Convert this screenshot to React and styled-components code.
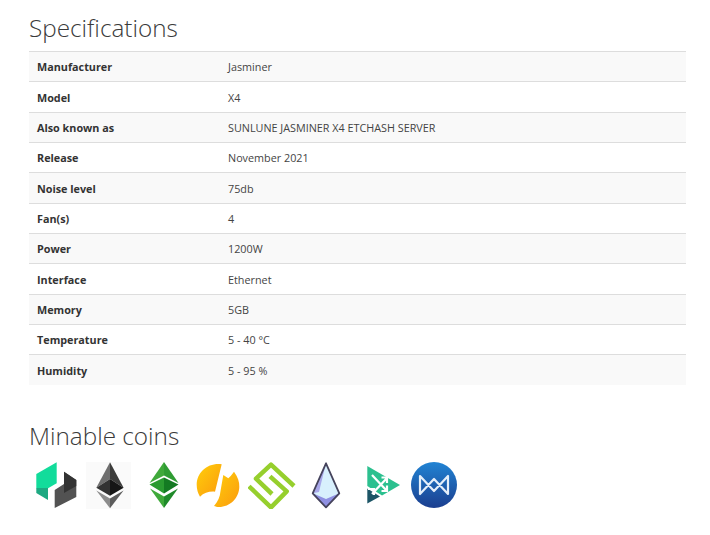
import React from "react";
import styled, { createGlobalStyle } from "styled-components";

const specs = [
  ["Manufacturer", "Jasminer"],
  ["Model", "X4"],
  ["Also known as", "SUNLUNE JASMINER X4 ETCHASH SERVER"],
  ["Release", "November 2021"],
  ["Noise level", "75db"],
  ["Fan(s)", "4"],
  ["Power", "1200W"],
  ["Interface", "Ethernet"],
  ["Memory", "5GB"],
  ["Temperature", "5 - 40 °C"],
  ["Humidity", "5 - 95 %"],
];

const UbiqIcon = () => (
  <svg viewBox="0 0 48 48">
    <path d="M4.300 13 24.700 1.300v21L16 27.300H4.300z" fill="#12dc9b" />
    <path d="M4.300 27H16v12L4.300 32z" fill="#1ea982" />
    <path d="M32 10.700 44.300 19v17L22.700 47V29L32 23z" fill="#525252" />
    <path d="M32 10.700 44.300 19v6L32 32z" fill="#333" />
  </svg>
);

const EthereumIcon = () => (
  <svg viewBox="0 0 48 48">
    <rect y="1" width="45" height="47" fill="#fafafa" />
    <path d="M24 1.300 10.300 26.700 24 18z" fill="#6f6f6f" />
    <path d="M24 1.300 37.600 26.700 24 18z" fill="#3c3c3b" />
    <path d="M24 18 10.300 26.700 24 34.700z" fill="#333" />
    <path d="M24 18 37.600 26.700 24 34.700z" fill="#161616" />
    <path d="M10.300 29.500 24 37.500v9.800z" fill="#8c8c8c" />
    <path d="M37.600 29.500 24 37.500v9.800z" fill="#5c5c5c" />
  </svg>
);

const EthereumClassicIcon = () => (
  <svg viewBox="0 0 48 48">
    <path d="M24 1 9.500 22 24 14.500z" fill="#3fa93a" />
    <path d="M24 1 38.500 22 24 14.500z" fill="#2f9c33" />
    <path d="M9.500 23.500 24 16.500V32.500z" fill="#2a9a30" />
    <path d="M38.500 23.500 24 16.500V32.500z" fill="#137a22" />
    <path d="M10 27.500 24 35.500V47z" fill="#3fa93a" />
    <path d="M38 27.500 24 35.500V47z" fill="#1f8a2a" />
  </svg>
);

const OrangeIcon = () => (
  <svg viewBox="0 0 48 48">
    <defs>
      <linearGradient id="orangeFill" x1="0" y1="0" x2="1" y2="1">
        <stop offset="0" stopColor="#ffcf0a" />
        <stop offset="1" stopColor="#fb9a0e" />
      </linearGradient>
    </defs>
    <path
      d="M27.700 3.300C14 1.500 2.800 11 2.700 24c0 4 1.200 8.500 3.300 11.700 4-4 9.500-5.500 15-5z"
      fill="url(#orangeFill)"
    />
    <path
      d="M29.300 14 34.300 17.300Q37 15 40 10.700C44 16 45.500 21 45.300 26 45 37 36 46 25 46 23 46 21.500 45.500 20 45 24 40 26 36 26.500 30z"
      fill="url(#orangeFill)"
    />
  </svg>
);

const SnakeIcon = () => (
  <svg viewBox="0 0 48 48">
    <path
      d="M46 25 23 3.700 8 17.700 24 33M1 25.300 23 46.300 38.700 30.300 22 15.300"
      fill="none"
      stroke="#96cf2d"
      strokeWidth="4.500"
      strokeLinejoin="round"
    />
  </svg>
);

const CrystalIcon = () => (
  <svg viewBox="0 0 48 48">
    <path d="M24 2.300 10.700 32.300 24 46.300 37.300 32.300z" fill="#d8f0fd" />
    <path d="M10.700 32.300 24 46.300V38zM37.300 32.300 24 46.300V38z" fill="#8f90e2" />
    <path d="M24 2.300 10.700 32.300 17 31z" fill="#a9a8ea" />
    <path
      d="M24 2.300 10.700 32.300 24 46.300 37.300 32.300z"
      fill="none"
      stroke="#45435c"
      strokeWidth="1.800"
      strokeLinejoin="round"
    />
  </svg>
);

const ArrowIcon = () => (
  <svg viewBox="0 0 48 48">
    <path d="M11.300 5 44 24 26 34.500 11.300 25z" fill="#2cc08f" />
    <path d="M11.300 27.500 24 35.500 11.300 42.500z" fill="#1c5566" />
    <path
      d="M16 14 31 30M31 24.500V30H25.500M16 33 31 17M25.500 16.500H31V22M12 28H18V34"
      fill="none"
      stroke="#fff"
      strokeWidth="2.200"
    />
  </svg>
);

const MetaverseIcon = () => (
  <svg viewBox="0 0 48 48">
    <defs>
      <linearGradient id="blueFill" x1="0" y1="0" x2="0" y2="1">
        <stop offset="0" stopColor="#2183d3" />
        <stop offset="1" stopColor="#1b3e8f" />
      </linearGradient>
    </defs>
    <circle cx="24" cy="24" r="23" fill="url(#blueFill)" />
    <path
      d="M10 33V15L24 30 38 15V33L24 18Z"
      fill="none"
      stroke="#e4eefa"
      strokeWidth="2.200"
      strokeLinejoin="round"
    />
  </svg>
);

const coins = [
  UbiqIcon,
  EthereumIcon,
  EthereumClassicIcon,
  OrangeIcon,
  SnakeIcon,
  CrystalIcon,
  ArrowIcon,
  MetaverseIcon,
];

export default function App() {
  return (
    <Page>
      <GlobalStyle />
      <Heading>Specifications</Heading>
      <SpecTable>
        <tbody>
          {specs.map(([label, value]) => (
            <tr key={label}>
              <LabelCell>{label}</LabelCell>
              <ValueCell>{value}</ValueCell>
            </tr>
          ))}
        </tbody>
      </SpecTable>
      <CoinHeading>Minable coins</CoinHeading>
      <CoinRow>
        {coins.map((Coin, index) => (
          <CoinBox key={index}>
            <Coin />
          </CoinBox>
        ))}
      </CoinRow>
    </Page>
  );
}

const GlobalStyle = createGlobalStyle`
  body {
    margin: 0;
    background: #fff;
    font-family: "Open Sans", "Liberation Sans", sans-serif;
  }
`;

const Page = styled.div`
  width: 710px;
  height: 535px;
  box-sizing: border-box;
  padding: 13px 24px 0 29px;
  overflow: hidden;
`;

const Heading = styled.h2`
  margin: 0 0 8px;
  font-size: 24.3px;
  line-height: 30px;
  font-weight: 300;
  color: #3a3a3a;
`;

const CoinHeading = styled(Heading)`
  margin: 36px 0 10px;
`;

const SpecTable = styled.table`
  width: 100%;
  table-layout: fixed;
  border-collapse: collapse;
  font-size: 10.8px;
  color: #333;

  tr {
    height: 30.35px;
    border-top: 1px solid #ddd;
  }

  tr:nth-child(odd) {
    background: #f9f9f9;
  }
`;

const LabelCell = styled.td`
  width: 191px;
  padding: 0 0 0 8px;
  font-weight: 700;
`;

const ValueCell = styled.td`
  padding: 0;
  color: #444;
`;

const CoinRow = styled.div`
  display: flex;
  gap: 6px;
  padding-left: 3px;
`;

const CoinBox = styled.div`
  width: 48px;
  height: 48px;

  svg {
    display: block;
    width: 100%;
    height: 100%;
  }
`;
